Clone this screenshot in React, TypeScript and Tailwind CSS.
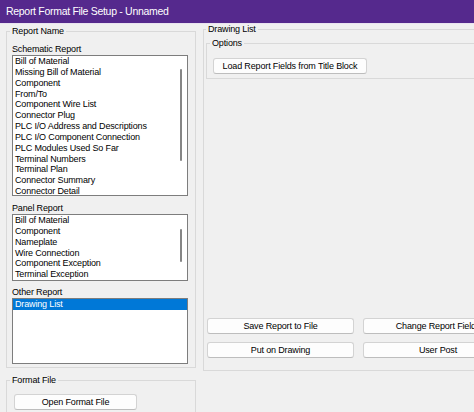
import type { ReactNode } from "react";

const schematicItems = [
  "Bill of Material",
  "Missing Bill of Material",
  "Component",
  "From/To",
  "Component Wire List",
  "Connector Plug",
  "PLC I/O Address and Descriptions",
  "PLC I/O Component Connection",
  "PLC Modules Used So Far",
  "Terminal Numbers",
  "Terminal Plan",
  "Connector Summary",
  "Connector Detail",
];

const panelItems = [
  "Bill of Material",
  "Component",
  "Nameplate",
  "Wire Connection",
  "Component Exception",
  "Terminal Exception",
];

function WinButton({ children, className }: { children: ReactNode; className: string }) {
  return (
    <button className={`flex items-center justify-center bg-[#fdfdfd] border border-[#d3d3d3] border-b-[#bdbdbd] rounded-[3px] text-black leading-none shrink-0 whitespace-nowrap overflow-hidden ${className}`}>
      {children}
    </button>
  );
}

function ListBox({
  items,
  selected,
  className,
  scroll,
}: {
  items: string[];
  selected?: number;
  className: string;
  scroll?: string;
}) {
  return (
    <div className={`relative bg-white border border-[#7d7d7d] overflow-hidden ${className}`}>
      <ul>
        {items.map((item, i) => (
          <li
            key={item}
            className={`h-[10.85px] leading-[10.85px] pl-[2px] whitespace-nowrap ${
              i === selected ? "bg-[#0078d7] text-white" : "text-black"
            }`}
          >
            {item}
          </li>
        ))}
      </ul>
      {scroll && (
        <div className={`absolute left-[167px] w-[1.5px] rounded-full bg-[#858585] ${scroll}`} />
      )}
    </div>
  );
}

function Label({ children, className }: { children: ReactNode; className?: string }) {
  return <div className={`h-[11px] leading-[11px] text-black ${className ?? ""}`}>{children}</div>;
}

export default function App() {
  return (
    <div className="w-[474px] h-[412px] overflow-hidden bg-[#f0f0f0] text-[9px] tracking-[-0.15px] font-['Liberation_Sans',Arial,sans-serif]">
      <div className="h-[24px] bg-[#55298d] border-b border-[#e9e3f0] flex items-center pl-[6px]">
        <span className="text-white text-[10.5px] tracking-[-0.3px]">Report Format File Setup - Unnamed</span>
      </div>

      <div className="flex">
        {/* left column */}
        <div className="ml-[6px] w-[190px] shrink-0 flex flex-col">
          <fieldset className="mt-[2px] border border-[#d9d9d9] px-[5px] pb-[3px]">
            <legend className="-ml-[2px] px-[2px] h-[11px] leading-[11px] text-black">Report Name</legend>
            <Label className="mt-[7px]">Schematic Report</Label>
            <ListBox items={schematicItems} className="h-[141px] w-[176px]" scroll="top-[13px] h-[92px]" />
            <Label className="mt-[7px]">Panel Report</Label>
            <ListBox items={panelItems} className="h-[67px] w-[176px]" scroll="top-[14px] h-[33px]" />
            <Label className="mt-[6px]">Other Report</Label>
            <ListBox items={["Drawing List"]} selected={0} className="h-[66px] w-[176px]" />
          </fieldset>

          <fieldset className="mt-[7px] border border-[#d9d9d9] pl-[7px] pb-[20px]">
            <legend className="-ml-[4px] px-[2px] h-[11px] leading-[11px] text-black">Format File</legend>
            <WinButton className="mt-[8px] w-[123px] h-[16px]">Open Format File</WinButton>
          </fieldset>
        </div>

        {/* right column */}
        <fieldset className="ml-[7px] w-[290px] h-[347px] shrink-0 border border-[#d9d9d9] flex flex-col">
          <legend className="ml-[2px] px-[2px] h-[11px] leading-[11px] text-black">Drawing List</legend>
          <fieldset className="mt-[3px] ml-[2px] border border-[#d9d9d9] pb-[4px]">
            <legend className="ml-[3px] px-[2px] h-[11px] leading-[11px] text-black">Options</legend>
            <WinButton className="mt-[9px] ml-[6px] w-[154px] h-[16px]">Load Report Fields from Title Block</WinButton>
          </fieldset>

          <div className="mt-auto mb-[12px] ml-[3px] grid grid-cols-[147px_150px] gap-x-[9px] gap-y-[8px]">
            <WinButton className="h-[16px] w-[147px]">Save Report to File</WinButton>
            <WinButton className="h-[16px] w-[150px]">Change Report Fields</WinButton>
            <WinButton className="h-[16px] w-[147px]">Put on Drawing</WinButton>
            <WinButton className="h-[16px] w-[150px]">User Post</WinButton>
          </div>
        </fieldset>
      </div>
    </div>
  );
}
